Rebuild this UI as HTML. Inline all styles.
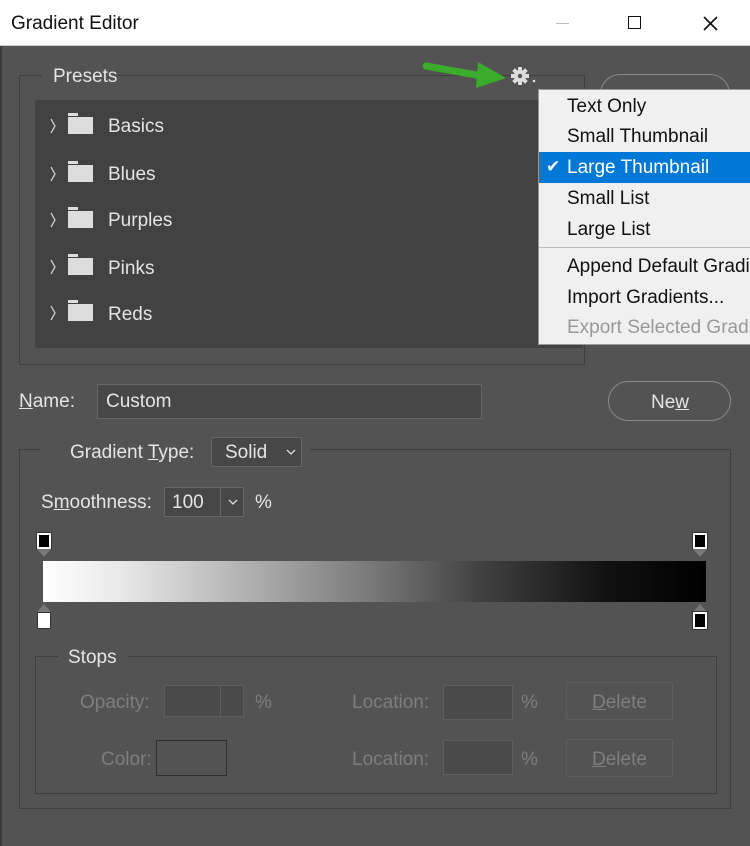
<!DOCTYPE html>
<html><head><style>
*{box-sizing:border-box;margin:0;padding:0}
body{width:750px;height:846px;background:#535353;font-family:"Liberation Sans",sans-serif;position:relative;overflow:hidden;color:#ddd}
.a{position:absolute}
.t{font-size:19px;color:#e4e4e4;white-space:nowrap}
.dim{color:#7e7e7e}
u{text-decoration:underline}
.ch{position:absolute;left:49px}
.fd{position:absolute;left:68px;width:25px;height:17px;background:#ddd}
.fd:before{content:"";position:absolute;left:0;top:-4px;width:10px;height:3px;background:#ddd}
</style></head><body>
<div class="a" style="left:0;top:0;width:750px;height:46px;background:#fff;border-bottom:1px solid #ccc"></div>
<div class="a" style="left:11px;top:13px;font-size:19px;color:#111">Gradient Editor</div>
<div class="a" style="left:556px;top:23px;width:13px;height:1px;background:#bbb"></div>
<div class="a" style="left:628px;top:16px;width:13px;height:13px;border:1.5px solid #111"></div>
<svg class="a" style="left:703px;top:16px" width="15" height="15"><path d="M1 1L14 14M14 1L1 14" stroke="#111" stroke-width="1.6"/></svg>
<div class="a" style="left:0;top:46px;width:2px;height:800px;background:#3a3a3a"></div>

<div class="a" style="left:19px;top:75px;width:566px;height:290px;border:1px solid #3f3f3f;border-radius:2px"></div>
<div class="a" style="left:42px;top:64px;width:76px;height:24px;background:#535353"></div>
<div class="a t" style="left:53px;top:66px">Presets</div>
<div class="a" style="left:35px;top:100px;width:548px;height:248px;background:#424242"></div>
<div class="a" style="left:600px;top:74px;width:130px;height:40px;border:1px solid #888;border-radius:20px"></div>
<svg class="a" style="left:420px;top:56px" width="90" height="36"><path d="M6 10 L62 20" stroke="#3cac2c" stroke-width="7" stroke-linecap="round"/><path d="M58 6 L86 22 L56 32 Z" fill="#3cac2c"/></svg>
<svg class="a" style="left:510px;top:66px" width="28" height="20"><g transform="translate(10,10)" fill="#ddd"><circle r="6"/><rect x="-2" y="-9" width="4" height="18"/><rect x="-2" y="-9" width="4" height="18" transform="rotate(45)"/><rect x="-2" y="-9" width="4" height="18" transform="rotate(90)"/><rect x="-2" y="-9" width="4" height="18" transform="rotate(135)"/><circle r="2.2" fill="#535353"/></g><circle cx="24" cy="15" r="1.3" fill="#ddd"/></svg>

<svg class="ch" style="top:118px" width="8" height="16"><path d="M2 1L6 8L2 15" stroke="#ccc" stroke-width="1.3" fill="none"/></svg><div class="fd" style="top:117px"></div><div class="a t" style="left:108px;top:116px">Basics</div>
<svg class="ch" style="top:166px" width="8" height="16"><path d="M2 1L6 8L2 15" stroke="#ccc" stroke-width="1.3" fill="none"/></svg><div class="fd" style="top:165px"></div><div class="a t" style="left:108px;top:164px">Blues</div>
<svg class="ch" style="top:212px" width="8" height="16"><path d="M2 1L6 8L2 15" stroke="#ccc" stroke-width="1.3" fill="none"/></svg><div class="fd" style="top:211px"></div><div class="a t" style="left:108px;top:210px">Purples</div>
<svg class="ch" style="top:259px" width="8" height="16"><path d="M2 1L6 8L2 15" stroke="#ccc" stroke-width="1.3" fill="none"/></svg><div class="fd" style="top:258px"></div><div class="a t" style="left:108px;top:258px">Pinks</div>
<svg class="ch" style="top:305px" width="8" height="16"><path d="M2 1L6 8L2 15" stroke="#ccc" stroke-width="1.3" fill="none"/></svg><div class="fd" style="top:304px"></div><div class="a t" style="left:108px;top:304px">Reds</div>

<div class="a" style="left:538px;top:89px;width:214px;height:256px;background:#f0f0f0;border:1px solid #999"></div>
<div class="a" style="left:539px;top:152px;width:211px;height:31px;background:#0078d7"></div>
<div class="a" style="left:539px;top:247px;width:211px;height:1px;background:#bbb"></div>
<div class="a" style="left:567px;top:96px;font-size:19px;color:#111;white-space:nowrap">Text Only</div>
<div class="a" style="left:567px;top:126px;font-size:19px;color:#111;white-space:nowrap">Small Thumbnail</div>
<div class="a" style="left:546px;top:157px;font-size:17px;color:#fff">✔</div>
<div class="a" style="left:567px;top:157px;font-size:19px;color:#fff;white-space:nowrap">Large Thumbnail</div>
<div class="a" style="left:567px;top:188px;font-size:19px;color:#111;white-space:nowrap">Small List</div>
<div class="a" style="left:567px;top:219px;font-size:19px;color:#111;white-space:nowrap">Large List</div>
<div class="a" style="left:567px;top:256px;font-size:19px;color:#111;white-space:nowrap;width:183px;overflow:hidden">Append Default Gradients</div>
<div class="a" style="left:567px;top:287px;font-size:19px;color:#111;white-space:nowrap">Import Gradients...</div>
<div class="a" style="left:567px;top:317px;font-size:19px;color:#999;white-space:nowrap;width:183px;overflow:hidden">Export Selected Gradients</div>

<div class="a t" style="left:19px;top:391px"><u>N</u>ame:</div>
<div class="a" style="left:97px;top:384px;width:385px;height:35px;background:#474747;border:1px solid #666"></div>
<div class="a t" style="left:106px;top:391px">Custom</div>
<div class="a" style="left:608px;top:381px;width:123px;height:40px;border:1px solid #888;border-radius:20px"></div>
<div class="a t" style="left:651px;top:392px">Ne<u>w</u></div>

<div class="a" style="left:19px;top:449px;width:712px;height:360px;border:1px solid #3f3f3f"></div>
<div class="a" style="left:40px;top:440px;width:270px;height:25px;background:#535353"></div>
<div class="a t" style="left:70px;top:442px">Gradient <u>T</u>ype:</div>
<div class="a" style="left:211px;top:437px;width:91px;height:30px;background:#474747;border:1px solid #666;border-radius:2px"></div>
<div class="a t" style="left:225px;top:442px">Solid</div>
<svg class="a" style="left:286px;top:449px" width="10" height="7"><path d="M1 1L5 5L9 1" stroke="#ddd" stroke-width="1.3" fill="none"/></svg>
<div class="a t" style="left:41px;top:492px">S<u>m</u>oothness:</div>
<div class="a" style="left:164px;top:487px;width:80px;height:30px;background:#474747;border:1px solid #666"></div>
<div class="a" style="left:220px;top:487px;width:1px;height:30px;background:#666"></div>
<div class="a t" style="left:172px;top:492px">100</div>
<svg class="a" style="left:228px;top:499px" width="10" height="7"><path d="M1 1L5 5L9 1" stroke="#ddd" stroke-width="1.3" fill="none"/></svg>
<div class="a t" style="left:255px;top:492px">%</div>

<div class="a" style="left:37px;top:533px;width:14px;height:16px;background:#000;border:2px solid #fff;outline:1px solid #333"></div>
<div class="a" style="left:37px;top:549px;width:0;height:0;border-left:7px solid transparent;border-right:7px solid transparent;border-top:8px solid #777"></div>
<div class="a" style="left:693px;top:533px;width:14px;height:16px;background:#000;border:2px solid #fff;outline:1px solid #333"></div>
<div class="a" style="left:693px;top:549px;width:0;height:0;border-left:7px solid transparent;border-right:7px solid transparent;border-top:8px solid #777"></div>
<div class="a" style="left:43px;top:561px;width:663px;height:41px;background:linear-gradient(90deg,#fff 0%,#e8e8e8 12%,#aaa 33%,#777 50%,#444 65%,#111 85%,#000 100%)"></div>
<div class="a" style="left:37px;top:604px;width:0;height:0;border-left:7px solid transparent;border-right:7px solid transparent;border-bottom:8px solid #777"></div>
<div class="a" style="left:37px;top:612px;width:14px;height:17px;background:#fff;border:1px solid #333"></div>
<div class="a" style="left:693px;top:604px;width:0;height:0;border-left:7px solid transparent;border-right:7px solid transparent;border-bottom:8px solid #777"></div>
<div class="a" style="left:693px;top:612px;width:14px;height:17px;background:#000;border:2px solid #fff;outline:1px solid #333"></div>

<div class="a" style="left:35px;top:656px;width:682px;height:138px;border:1px solid #3f3f3f"></div>
<div class="a" style="left:58px;top:646px;width:70px;height:22px;background:#535353"></div>
<div class="a t" style="left:68px;top:647px">Stops</div>
<div class="a t dim" style="left:80px;top:692px">Opacity:</div>
<div class="a" style="left:164px;top:685px;width:80px;height:32px;border:1px solid #5e5e5e;background:#4a4a4a"></div>
<div class="a" style="left:220px;top:685px;width:1px;height:32px;background:#5e5e5e"></div>
<div class="a t dim" style="left:255px;top:692px">%</div>
<div class="a t dim" style="left:352px;top:692px">Location:</div>
<div class="a" style="left:443px;top:685px;width:70px;height:35px;border:1px solid #5e5e5e;background:#4a4a4a"></div>
<div class="a t dim" style="left:521px;top:692px">%</div>
<div class="a" style="left:566px;top:682px;width:107px;height:38px;border:1px solid #5e5e5e;border-radius:2px"></div>
<div class="a t dim" style="left:592px;top:692px"><u>D</u>elete</div>
<div class="a t dim" style="left:101px;top:749px">Color:</div>
<div class="a" style="left:156px;top:740px;width:71px;height:36px;border:1px solid #2e2e2e"></div>
<div class="a t dim" style="left:352px;top:749px">Location:</div>
<div class="a" style="left:443px;top:740px;width:70px;height:35px;border:1px solid #5e5e5e;background:#4a4a4a"></div>
<div class="a t dim" style="left:521px;top:749px">%</div>
<div class="a" style="left:566px;top:739px;width:107px;height:38px;border:1px solid #5e5e5e;border-radius:2px"></div>
<div class="a t dim" style="left:592px;top:749px"><u>D</u>elete</div>
</body></html>
